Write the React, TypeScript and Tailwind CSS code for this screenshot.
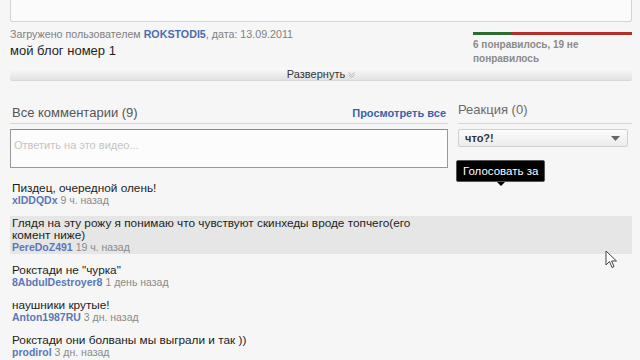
import React from 'react';

interface Comment {
    text: string[];
    author: string;
    time: string;
    active?: boolean;
}

const COMMENTS: Comment[] = [
    { text: ['Пиздец, очередной олень!'], author: 'xIDDQDx', time: '9 ч. назад' },
    {
        text: ['Глядя на эту рожу я понимаю что чувствуют скинхеды вроде топчего(его комент ниже)'],
        author: 'PereDoZ491',
        time: '19 ч. назад',
        active: true,
    },
    { text: ['Рокстади не "чурка"'], author: '8AbdulDestroyer8', time: '1 день назад' },
    { text: ['наушники крутые!'], author: 'Anton1987RU', time: '3 дн. назад' },
    { text: ['Рокстади они болваны мы выграли и так ))'], author: 'prodirol', time: '3 дн. назад' },
];

export default function App() {
    return (
        <div className="relative w-[640px] h-[360px] overflow-hidden bg-[#f6f6f6] font-['Liberation_Sans',Arial,sans-serif]">
            <div className="pl-[10px] pr-[8px]">
                {/* player frame bottom */}
                <div className="h-[22px] border border-t-0 border-[#d4d4d4] rounded-b-[3px] bg-[#fbfbfb]" />

                {/* upload info + rating */}
                <div className="flex justify-between mt-[5px]">
                    <div>
                        <p className="text-[10.7px] leading-[14px] text-[#808080]">
                            Загружено пользователем <span className="text-[#4a6cae] font-bold">ROKSTODI5</span>, дата: 13.09.2011
                        </p>
                        <p className="text-[13px] leading-[16px] text-[#1e1e1e] mt-[2px]">мой блог номер 1</p>
                    </div>
                    <div className="w-[159px] pt-[5px]">
                        <div className="flex h-[3px]">
                            <div className="w-[39px] bg-[#2e6b30]" />
                            <div className="flex-1 bg-[#b3302a]" />
                        </div>
                        <p className="text-[10px] leading-[14px] text-[#8a8a8a] font-bold mt-[3px]">
                            6 понравилось, 19 не
                            <br />
                            понравилось
                        </p>
                    </div>
                </div>

                {/* expand bar */}
                <div className="mt-[3px] h-[12px] flex items-center justify-center gap-[3px] bg-gradient-to-b from-[#f8f8f8] to-[#e2e2e2] border-b border-[#d8d8d8] rounded-[2px]">
                    <span className="text-[11px] text-[#333] leading-none">Развернуть</span>
                    <svg width="7" height="6" viewBox="0 0 7 6">
                        <path d="M0.5 0.5 L3.5 3 L6.5 0.5 M0.5 2.8 L3.5 5.3 L6.5 2.8" stroke="#b8b8b8" strokeWidth="1" fill="none" />
                    </svg>
                </div>

                {/* header row */}
                <div className="flex mt-[16px]">
                    <div className="w-[438px] flex justify-between items-end border-b border-[#d8d8d8] pb-[2px] px-[2px]">
                        <span className="text-[13px] leading-[16px] text-[#555]">Все комментарии (9)</span>
                        <span className="text-[11px] leading-[16px] text-[#3a62ad] font-bold">Просмотреть все</span>
                    </div>
                    <div className="flex-1 ml-[10px] border-b border-[#d8d8d8] pb-[2px]">
                        <span className="text-[13px] leading-[16px] text-[#6a6a6a]">Реакция (0)</span>
                    </div>
                </div>

                {/* input row */}
                <div className="flex mt-[5px]">
                    <div className="w-[438px] h-[39px] border border-[#999] border-t-[#8a8a8a] bg-[#fcfcfc] px-[3px] py-[2px]">
                        <span className="text-[11px] leading-[13px] text-[#c4c4c4]">Ответить на это видео...</span>
                    </div>
                    <div className="ml-[10px]">
                        <div className="w-[170px] h-[18px] border border-[#d0d0d0] rounded-[2px] bg-gradient-to-b from-[#fbfbfb] to-[#ececec] flex items-center justify-between pl-[6px] pr-[7px]">
                            <span className="text-[11px] font-bold text-[#333]">что?!</span>
                            <svg width="9" height="5" viewBox="0 0 9 5">
                                <path d="M0 0 L9 0 L4.5 5 Z" fill="#666" />
                            </svg>
                        </div>
                    </div>
                </div>

                {/* comments */}
                <div className="mt-[14px] flex flex-col gap-[11px]">
                    {COMMENTS.map((c, i) => (
                        <div key={i} className={`px-[2px] ${c.active ? 'bg-[#e6e6e6] py-[1px] -my-[1px]' : ''}`}>
                            {c.text.map((line, j) => (
                                <p key={j} className="w-[410px] text-[11.8px] leading-[12px] text-[#1c1c1c]">{line}</p>
                            ))}
                            <p className="text-[10.5px] leading-[12px]">
                                <span className="text-[#5a78b8] font-bold">{c.author}</span>{' '}
                                <span className="text-[#8a8a8a]">{c.time}</span>
                            </p>
                        </div>
                    ))}
                </div>
            </div>

            {/* tooltip */}
            <div className="absolute left-[456px] top-[160px] flex flex-col items-center">
                <div className="bg-black text-white text-[11.5px] leading-[20px] px-[6px] rounded-[2px] border border-[#555]">Голосовать за</div>
                <div className="w-0 h-0 border-x-[4px] border-x-transparent border-t-[4px] border-t-black" />
            </div>

            {/* mouse cursor */}
            <svg className="absolute left-[605px] top-[250px]" width="14" height="20" viewBox="0 0 14 20">
                <path d="M1 1 L1 15 L4.5 11.5 L7 17.5 L9 16.6 L6.6 11 L11.5 11 Z" fill="#fff" stroke="#444" strokeWidth="1" />
            </svg>
        </div>
    );
}
